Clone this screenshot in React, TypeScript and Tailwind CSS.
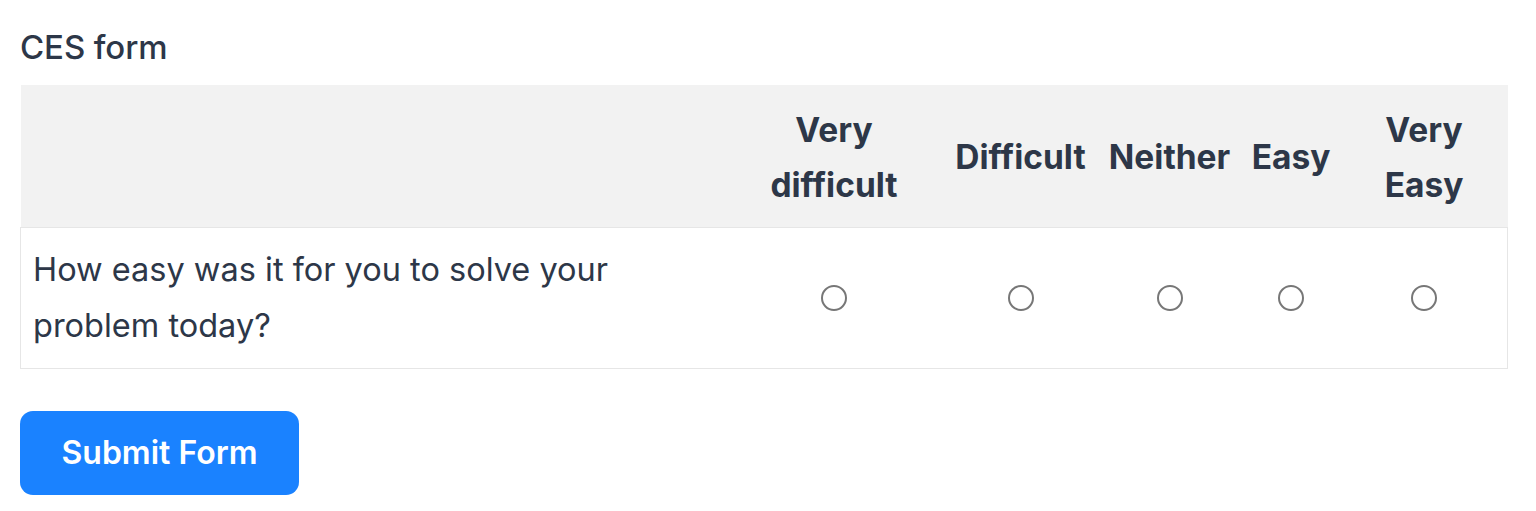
import React from "react";

const cols = [
  { label: ["Very", "difficult"], w: "w-[219px]" },
  { label: ["Difficult"], w: "w-[154px]" },
  { label: ["Neither"], w: "w-[144px]" },
  { label: ["Easy"], w: "w-[99px]" },
  { label: ["Very", "Easy"], w: "w-[167px]" },
];

export default function App() {
  return (
    <div className="bg-white w-[1536px] h-[511px] px-[20px] pt-[26px] text-[#2d3748]" style={{ fontFamily: "Inter, 'Noto Sans', sans-serif" }}>
      <h1 className="text-[33px] leading-[42px] font-medium tracking-[-0.1px]">CES form</h1>
      <table className="mt-[17px] w-[1488px] border-collapse table-fixed">
        <thead>
          <tr className="bg-[#f2f2f2]">
            <th className="h-[142px] p-0"></th>
            {cols.map((c, i) => (
              <th key={i} className={`${c.w} h-[142px] px-[10px] pt-[4px] pb-0 text-center align-middle font-bold text-[33.5px] leading-[55px]`}>
                {c.label.map((l, j) => (
                  <div key={j}>{l}</div>
                ))}
              </th>
            ))}
          </tr>
        </thead>
        <tbody>
          <tr className="border border-[#e6e6e6]">
            <td className="h-[141px] pl-[12px] pr-[12px] py-0 align-middle text-[32.5px] leading-[56px] font-normal">
              How easy was it for you to solve your
              <br />
              problem today?
            </td>
            {cols.map((_, i) => (
              <td key={i} className="text-center align-middle p-0">
                <span className="inline-block w-[26px] h-[26px] rounded-full border-[2px] border-[#777777] bg-white align-middle"></span>
              </td>
            ))}
          </tr>
        </tbody>
      </table>
      <button className="mt-[42px] h-[84px] w-[279px] rounded-[13px] bg-[#1a82ff] text-white text-[32px] font-semibold flex items-center justify-center">
        Submit Form
      </button>
    </div>
  );
}
